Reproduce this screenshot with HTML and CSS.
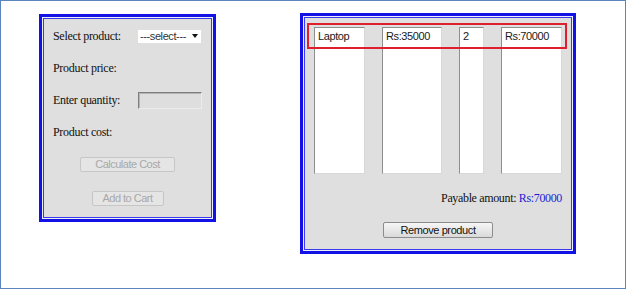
FILE: index.html
```html
<!DOCTYPE html>
<html lang="en">
<head>
<meta charset="utf-8">
<title>Shopping cart</title>
<link rel="stylesheet" href="styles.css">
</head>
<body>
  <section class="panel order-form">
    <div class="form-grid">
      <span class="label">Select product:</span>
      <div class="select"><span>---select---</span><svg class="arrow" width="6" height="4" viewBox="0 0 6 4"><path d="M0 0H6L3 4Z" fill="#111"/></svg></div>
      <span class="label">Product price:</span>
      <span></span>
      <span class="label">Enter quantity:</span>
      <input class="qty" type="text" disabled>
      <span class="label">Product cost:</span>
      <span></span>
    </div>
    <div class="form-actions">
      <button class="btn-disabled calc" disabled>Calculate Cost</button>
      <button class="btn-disabled add" disabled>Add to Cart</button>
    </div>
  </section>

  <section class="panel cart">
    <div class="cart-lists">
      <div class="listbox w-name">Laptop</div>
      <div class="listbox w-price">Rs:35000</div>
      <div class="listbox w-qty">2</div>
      <div class="listbox w-cost">Rs:70000</div>
    </div>
    <div class="highlight"></div>
    <p class="total">Payable amount: <span class="amount">Rs:70000</span></p>
    <div class="cart-actions">
      <button class="btn-remove">Remove product</button>
    </div>
  </section>
</body>
</html>
```

FILE: styles.css
```css
html, body {
  margin: 0;
  padding: 0;
}

body {
  width: 626px;
  height: 289px;
  box-sizing: border-box;
  border: 1px solid #5a86bd;
  background: #ffffff;
  overflow: hidden;
  display: flex;
  align-items: flex-start;
  padding: 12px 0 0 38px;
  font-family: "Liberation Serif", "Times New Roman", serif;
}

.panel {
  box-sizing: border-box;
  border: 3px solid #1212e6;
  box-shadow: inset 0 0 0 1px #eceefa, inset 0 0 0 2px #3a3aea;
  background: #dfdfdf;
}

/* Left form panel */
.order-form {
  width: 177px;
  height: 208px;
  margin-top: 1px;
  padding: 3px 0 0 0;
}

.form-grid {
  display: grid;
  grid-template-columns: 85px 64px;
  grid-auto-rows: 32px;
  align-items: center;
  padding-left: 11px;
}

.label {
  font-size: 12px;
  line-height: 14px;
  letter-spacing: -0.3px;
  color: #111;
}

.select {
  width: 63px;
  height: 13px;
  box-sizing: border-box;
  background: #ffffff;
  display: flex;
  align-items: center;
  justify-content: space-between;
  padding: 0 3px 0 2px;
  font-family: "Liberation Sans", Arial, sans-serif;
  font-size: 11px;
  line-height: 13px;
  letter-spacing: -0.4px;
  color: #333;
}

.arrow {
  display: block;
}

.qty {
  width: 64px;
  height: 17px;
  box-sizing: border-box;
  margin: 0;
  padding: 0;
  border: 1px solid;
  border-color: #7e7e7e #ececec #ececec #7e7e7e;
  box-shadow: inset 1px 1px 0 #b4b4b4;
  background: #dedede;
}

.form-actions {
  display: flex;
  flex-direction: column;
  align-items: center;
}

.btn-disabled {
  height: 15px;
  box-sizing: border-box;
  margin: 0;
  padding: 0;
  font-family: "Liberation Sans", Arial, sans-serif;
  font-size: 11px;
  line-height: 13px;
  letter-spacing: -0.5px;
  color: #a8a8a8;
  background: #e5e5e5;
  border: 1px solid #c6c6c6;
  border-radius: 2px;
}

.calc {
  width: 95px;
  margin-top: 9px;
}

.add {
  width: 72px;
  margin-top: 19px;
}

/* Right cart panel */
.cart {
  position: relative;
  width: 276px;
  height: 241px;
  margin-left: 84px;
  padding: 11px;
}

.cart-lists {
  display: flex;
  gap: 17px;
}

.listbox {
  height: 147px;
  box-sizing: border-box;
  background: #ffffff;
  border: 1px solid;
  border-color: #8e8e8e #d8d8d8 #d8d8d8 #8e8e8e;
  padding: 2px 3px;
  font-family: "Liberation Sans", Arial, sans-serif;
  font-size: 11px;
  line-height: 13px;
  letter-spacing: -0.4px;
  color: #1a1a1a;
}

.w-name { width: 51px; }
.w-price { width: 60px; }
.w-qty { width: 25px; }
.w-cost { width: 61px; }

.highlight {
  position: absolute;
  left: 4px;
  top: 7px;
  width: 260px;
  height: 26px;
  box-sizing: border-box;
  border: 2px solid #e01f2d;
  pointer-events: none;
}

.total {
  margin: 17px 0 0 0;
  text-align: right;
  font-size: 12px;
  line-height: 14px;
  letter-spacing: -0.35px;
  color: #111;
}

.amount {
  color: #1c1cd6;
}

.cart-actions {
  display: flex;
  justify-content: center;
  margin-top: 17px;
}

.btn-remove {
  width: 110px;
  height: 16px;
  box-sizing: border-box;
  margin: 0;
  padding: 0;
  font-family: "Liberation Sans", Arial, sans-serif;
  font-size: 11px;
  line-height: 14px;
  letter-spacing: -0.4px;
  color: #111;
  background: linear-gradient(#f6f6f6, #dadada);
  border: 1px solid #8c8c8c;
  border-radius: 2px;
}
```
